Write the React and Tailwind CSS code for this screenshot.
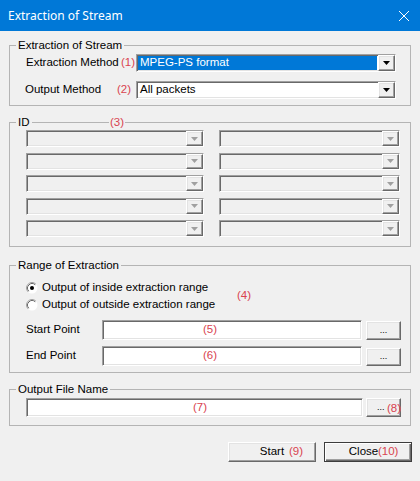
import React from "react";

// classic win32 3d borders
const sunken =
  "border border-t-[#a0a0a0] border-l-[#a0a0a0] border-b-white border-r-white shadow-[inset_1px_1px_0_#696969,inset_-1px_-1px_0_#e3e3e3]";
const raised =
  "border border-t-white border-l-white border-b-[#696969] border-r-[#696969] shadow-[inset_-1px_-1px_0_#a0a0a0,inset_1px_1px_0_#e3e3e3]";

const Mark = ({ children, className = "" }) => (
  <span className={`text-[#d9434f] ${className}`}>{children}</span>
);

const Arrow = ({ disabled }) => (
  <svg width="7" height="4" viewBox="0 0 7 4">
    <path d="M0 0h7L3.5 4z" fill={disabled ? "#a0a0a0" : "#000"} />
  </svg>
);

const Combo = ({ value, selected, disabled, className = "" }) => (
  <div
    className={`flex ${sunken} ${disabled ? "bg-[#f0f0f0]" : "bg-white"} ${className}`}
  >
    <div className="flex min-w-0 flex-1 p-[1px]">
      <span
        className={`flex flex-1 items-center pl-[2px] ${selected ? "bg-[#0078d7] text-white" : "text-black"}`}
      >
        {value}
      </span>
    </div>
    <div className={`flex w-[17px] items-center justify-center bg-[#f0f0f0] ${raised}`}>
      <Arrow disabled={disabled} />
    </div>
  </div>
);

const Radio = ({ checked, label }) => (
  <div className="flex h-[17px] items-center gap-[4px]">
    <svg width="12" height="12" viewBox="0 0 12 12">
      <circle cx="6" cy="6" r="5.5" fill="#fff" />
      <path d="M2.11 9.89A5.5 5.5 0 0 1 9.89 2.11" stroke="#a0a0a0" fill="none" />
      <path d="M2.82 9.18A4.5 4.5 0 0 1 9.18 2.82" stroke="#696969" fill="none" />
      {checked && <circle cx="6" cy="6" r="2" fill="#000" />}
    </svg>
    <span>{label}</span>
  </div>
);

const Group = ({ title, mark, children, className = "" }) => (
  <fieldset className={`ml-[9px] w-[402px] border border-[#b4b4b4] ${className}`}>
    <legend className="relative ml-[6px] px-[2px] leading-[14px]">
      {title}
      {mark}
    </legend>
    {children}
  </fieldset>
);

// small "..." browse button
const Dots = ({ className = "", children }) => (
  <button className={`relative flex w-[35px] items-end justify-center bg-[#f0f0f0] pb-[4px] leading-none ${raised} ${className}`}>
    <span className="text-[9px]">...</span>
    {children}
  </button>
);

export default function App() {
  const ids = Array.from({ length: 10 });

  return (
    <div
      className="flex h-[481px] w-[420px] flex-col bg-[#f0f0f0] text-[11.5px] text-black"
      style={{ fontFamily: '"Liberation Sans", Arial, sans-serif' }}
    >
      {/* title bar */}
      <div className="flex h-[31px] shrink-0 items-center justify-between bg-[#0078d7] pl-[8px] pr-[11px] text-white">
        <span className="text-[12px]" style={{ fontFamily: '"Noto Sans", sans-serif' }}>
          Extraction of Stream
        </span>
        <svg width="10" height="10" viewBox="0 0 10 10">
          <path d="M0 0L10 10M10 0L0 10" stroke="#fff" strokeWidth="1" />
        </svg>
      </div>

      {/* extraction of stream */}
      <Group title="Extraction of Stream" className="mt-[7px]">
        <div className="flex flex-col gap-[9px] pb-[6px] pl-[16px] pr-[14px] pt-[2px]">
          <div className="flex h-[18px] items-center">
            <div className="flex w-[110px] items-center justify-between pr-[1px]">
              <span>Extraction Method</span>
              <Mark>(1)</Mark>
            </div>
            <Combo value="MPEG-PS format" selected className="h-[18px] flex-1" />
          </div>
          <div className="flex h-[18px] items-center">
            <div className="flex w-[110px] items-center justify-between pr-[5px]">
              <span className="-ml-[1px]">Output Method</span>
              <Mark>(2)</Mark>
            </div>
            <Combo value="All packets" className="h-[18px] flex-1" />
          </div>
        </div>
      </Group>

      {/* ID */}
      <Group
        title="ID"
        className="mt-[9px]"
        mark={
          <Mark className="absolute left-[93px] top-0 bg-[#f0f0f0] px-[1px]">(3)</Mark>
        }
      >
        <div className="grid grid-cols-[178px_181px] gap-x-[15px] gap-y-[5.5px] pb-[9px] pl-[16px] pt-[1px]">
          {ids.map((_, i) => (
            <Combo key={i} disabled className="h-[17px]" />
          ))}
        </div>
      </Group>

      {/* range */}
      <Group title="Range of Extraction" className="mt-[11px]">
        <div className="relative flex flex-col pb-[6px] pl-[16px] pr-[9px] pt-[7px]">
          <Radio checked label="Output of inside extraction range" />
          <Radio label="Output of outside extraction range" />
          <Mark className="absolute left-[227px] top-[16px] leading-[14px]">(4)</Mark>

          <div className="mt-[7px] flex h-[20px] items-stretch">
            <span className="flex w-[76px] items-center">Start Point</span>
            <div className={`relative flex w-[260px] items-center bg-white ${sunken}`}>
              <Mark className="absolute left-[100px]">(5)</Mark>
            </div>
            <Dots className="ml-[4px] mt-[1px]" />
          </div>
          <div className="mt-[6px] flex h-[20px] items-stretch">
            <span className="flex w-[76px] items-center">End Point</span>
            <div className={`relative flex w-[260px] items-center bg-white ${sunken}`}>
              <Mark className="absolute left-[100px]">(6)</Mark>
            </div>
            <Dots className="ml-[4px] mt-[2px]" />
          </div>
        </div>
      </Group>

      {/* output file */}
      <Group title="Output File Name" className="mt-[9px]">
        <div className="box-content flex h-[19px] pb-[8px] pl-[16px] pt-[2px]">
          <div className={`relative flex w-[337px] items-center bg-white ${sunken}`}>
            <Mark className="absolute left-[166px]">(7)</Mark>
          </div>
          <Dots className="ml-[3px] !justify-start pl-[10px]">
            <Mark className="absolute left-[20px] top-[2px] text-[11.5px] leading-[14px]">(8)</Mark>
          </Dots>
        </div>
      </Group>

      {/* buttons */}
      <div className="mt-[16px] flex justify-end gap-[8px] pr-[8px]">
        <button className={`relative flex h-[20px] w-[88px] items-center justify-center bg-[#f0f0f0] ${raised}`}>
          <span>Start</span>
          <Mark className="absolute left-[60px]">(9)</Mark>
        </button>
        <button className="relative flex h-[20px] w-[88px] items-center justify-center border border-[#3c3c3c] bg-[#f0f0f0] shadow-[inset_1px_1px_0_#fff,inset_-1px_-1px_0_#696969,inset_-2px_-2px_0_#a0a0a0]">
          <span className="-ml-[9px]">Close</span>
          <Mark className="absolute left-[53px]">(10)</Mark>
        </button>
      </div>
    </div>
  );
}
